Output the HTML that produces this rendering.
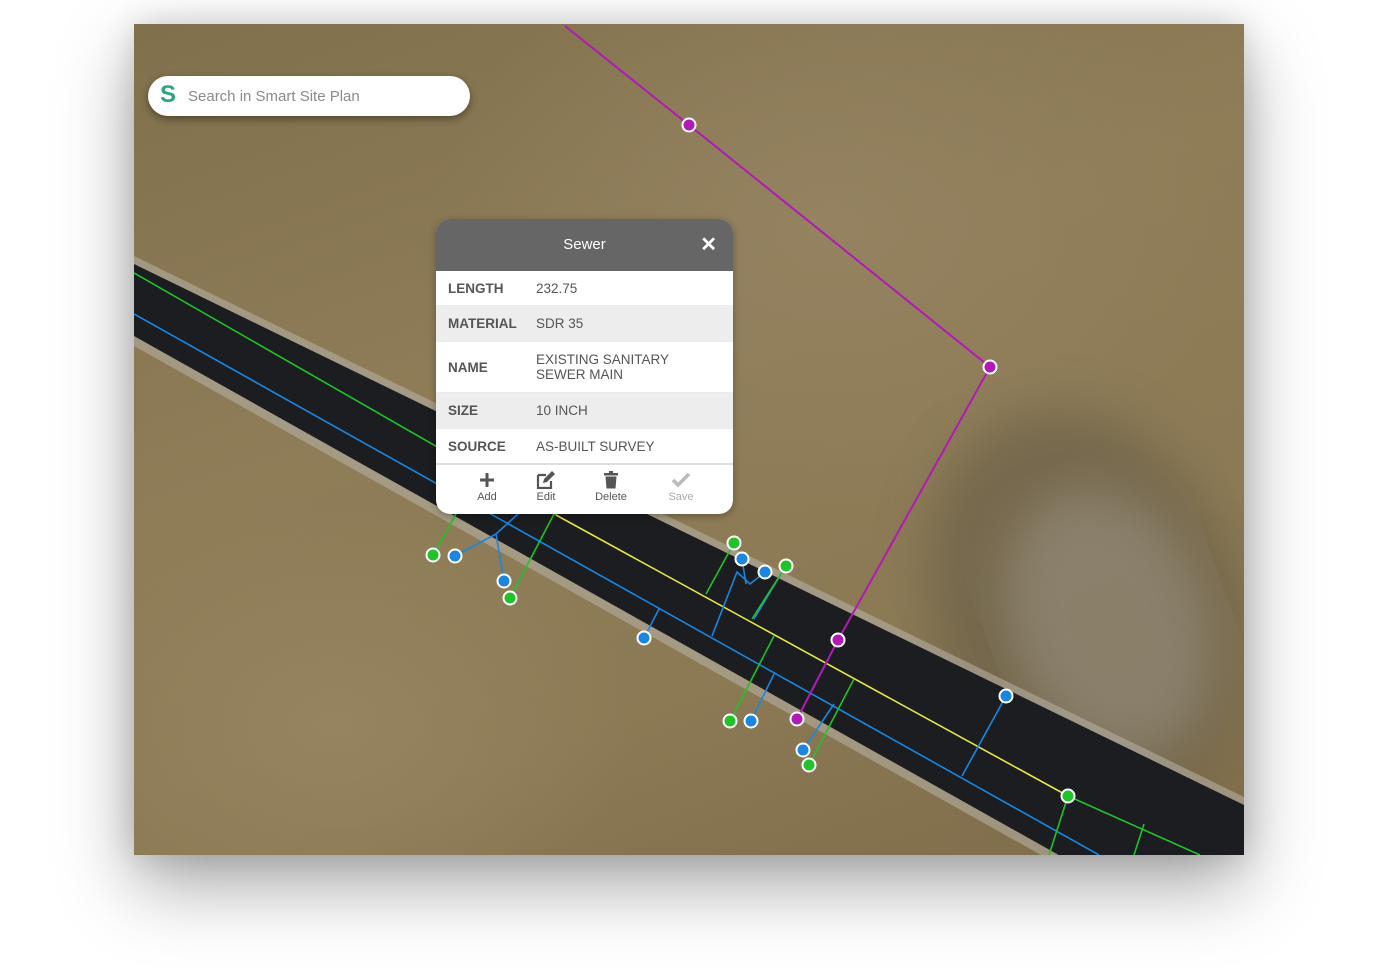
<!DOCTYPE html>
<html><head><meta charset="utf-8"><style>
body{margin:0;width:1381px;height:973px;background:#fff;overflow:hidden;font-family:"Liberation Sans",sans-serif;}
#map{position:absolute;left:134px;top:24px;width:1110px;height:831px;overflow:hidden;
box-shadow:0 30px 70px rgba(0,0,0,.35),0 0 30px rgba(0,0,0,.15);
background:
radial-gradient(ellipse 300px 220px at 200px 700px,#968460 0%,rgba(0,0,0,0) 100%),
radial-gradient(ellipse 400px 300px at 700px 200px,#948260 0%,rgba(0,0,0,0) 100%),
linear-gradient(160deg,#80704c 0%,#8f7d58 40%,#8c7a55 70%,#7e6c4a 100%);}
#search{position:absolute;left:148px;top:76px;width:322px;height:40px;background:#fff;border-radius:20px;box-shadow:0 3px 8px rgba(0,0,0,.4);}
#search .s{position:absolute;left:12px;top:5px;font:bold 24px "Liberation Sans",sans-serif;color:#2aa57a;}
#search .t{position:absolute;left:40px;top:12px;font-size:15px;color:#8a8a8a;}
#pop{position:absolute;left:436px;top:219px;width:297px;height:295px;background:#fff;border-radius:14px;overflow:hidden;box-shadow:0 2px 8px rgba(0,0,0,.3);}
#pop .h{height:52px;background:#666;color:#fff;text-align:center;line-height:52px;font-size:15px;position:relative}
#pop .h b{position:absolute;right:16px;top:0;font-size:20px}
.r{display:flex;align-items:center;font-size:13.5px;color:#555;border-bottom:1px solid #eaeaea}
.r .k{width:88px;padding-left:12px;font-weight:bold}
.r.g{background:#ededed}
.bt{position:absolute;top:244px;left:0;width:100%;height:51px;border-top:2px solid #ddd;font-size:11px;color:#555}
.bt div{position:absolute;text-align:center;top:6px}
.bt svg{display:block;margin:0 auto 2px}
</style></head><body>
<div id="map">
<svg width="1110" height="831" style="position:absolute;left:0;top:0">
<defs><filter id="b"><feGaussianBlur stdDeviation="25"/></filter></defs>
<ellipse cx="950" cy="580" rx="150" ry="200" transform="rotate(-20 950 580)" fill="#5e5645" opacity=".5" filter="url(#b)"/>
<ellipse cx="975" cy="600" rx="100" ry="140" transform="rotate(-20 975 600)" fill="#9a9280" opacity=".6" filter="url(#b)"/>
<polygon points="0,232 1110,773 1110,945 0,322" fill="#b8b2a8" opacity=".55"/>
<polygon points="0,240 1110,781 1110,935 0,312" fill="#1b1d20"/>
<g fill="none" stroke-width="1.6">
<line x1="0" y1="290" x2="965" y2="831" stroke="#1a86e0"/>
<polyline points="0,249 422,491" stroke="#22c22a"/>
<line x1="422" y1="491" x2="934" y2="772" stroke="#e6e64a"/>
<line x1="934" y1="772" x2="1066" y2="831" stroke="#22c22a"/>
<polyline points="431,2 555,101 856,343 704,616 663,695" stroke="#b01ab5" stroke-width="2"/>
<path d="M321,532 L362,510 L370,557 M362,510 L384,490 M510,614 L525,585 M578,612 L603,548 L616,560 L631,548 M612,560 L608,535 M620,595 L650,545 M617,697 L640,650 M669,726 L700,680 M828,752 L872,672" stroke="#1a86e0"/>
<path d="M299,531 L322,490 M376,574 L420,490 M572,570 L600,519 M618,595 L652,542 M596,697 L640,612 M675,741 L720,655 M934,772 L915,831 M1010,800 L1000,831" stroke="#22c22a"/>
</g>
<g stroke="#fff" stroke-width="2">
<circle cx="555" cy="101" r="6.5" fill="#b01ab5"/><circle cx="856" cy="343" r="6.5" fill="#b01ab5"/>
<circle cx="704" cy="616" r="6.5" fill="#b01ab5"/><circle cx="663" cy="695" r="6.5" fill="#b01ab5"/>
<circle cx="299" cy="531" r="6.5" fill="#22c22a"/><circle cx="321" cy="532" r="6.5" fill="#1a86e0"/>
<circle cx="370" cy="557" r="6.5" fill="#1a86e0"/><circle cx="376" cy="574" r="6.5" fill="#22c22a"/>
<circle cx="510" cy="614" r="6.5" fill="#1a86e0"/><circle cx="600" cy="519" r="6.5" fill="#22c22a"/>
<circle cx="608" cy="535" r="6.5" fill="#1a86e0"/><circle cx="631" cy="548" r="6.5" fill="#1a86e0"/>
<circle cx="652" cy="542" r="6.5" fill="#22c22a"/><circle cx="596" cy="697" r="6.5" fill="#22c22a"/>
<circle cx="617" cy="697" r="6.5" fill="#1a86e0"/><circle cx="669" cy="726" r="6.5" fill="#1a86e0"/>
<circle cx="675" cy="741" r="6.5" fill="#22c22a"/><circle cx="872" cy="672" r="6.5" fill="#1a86e0"/>
<circle cx="934" cy="772" r="6.5" fill="#22c22a"/>
</g>
</svg>
</div>
<div id="search"><span class="s">S</span><span class="t">Search in Smart Site Plan</span></div>
<div id="pop">
<div class="h">Sewer<b>✕</b></div>
<div class="r" style="height:34px"><span class="k">LENGTH</span>232.75</div>
<div class="r g" style="height:35px"><span class="k">MATERIAL</span>SDR 35</div>
<div class="r" style="height:50px"><span class="k">NAME</span><span>EXISTING SANITARY<br>SEWER MAIN</span></div>
<div class="r g" style="height:35px"><span class="k">SIZE</span>10 INCH</div>
<div class="r" style="height:35px"><span class="k">SOURCE</span>AS-BUILT SURVEY</div>
<div class="bt">
<div style="left:38px;width:26px"><svg width="18" height="18"><path d="M9 2v14M2 9h14" stroke="#555" stroke-width="3"/></svg>Add</div>
<div style="left:97px;width:26px"><svg width="20" height="18"><path d="M2 4h8M2 4v13h13v-7" fill="none" stroke="#555" stroke-width="2.2"/><path d="M7 12l1-4 8-8 3 3-8 8z" fill="#555"/></svg>Edit</div>
<div style="left:155px;width:40px"><svg width="16" height="18"><rect x="1" y="2" width="14" height="2.5" fill="#555"/><rect x="6" y="0" width="4" height="3" fill="#555"/><path d="M2.5 5.5h11l-1 12h-9z" fill="#555"/></svg>Delete</div>
<div style="left:230px;width:30px;color:#aaa"><svg width="20" height="18"><path d="M2 9l5 5 11-11" fill="none" stroke="#bbb" stroke-width="3.5"/></svg>Save</div>
</div>
</div>
</body></html>
